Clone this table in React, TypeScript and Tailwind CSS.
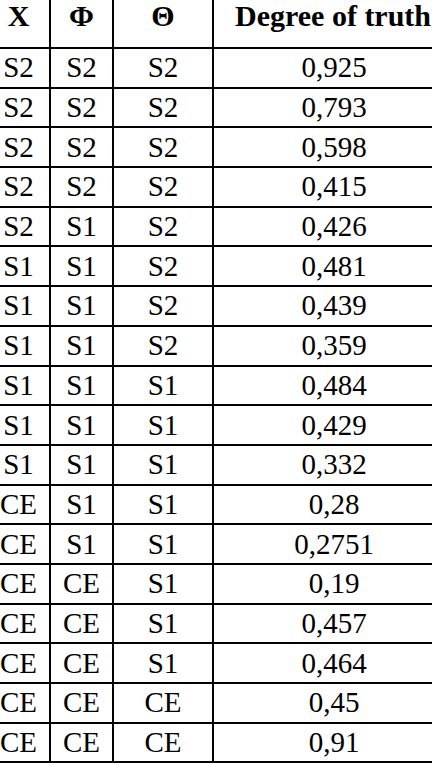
const rows: [string, string, string, string][] = [
  ['S2', 'S2', 'S2', '0,925'],
  ['S2', 'S2', 'S2', '0,793'],
  ['S2', 'S2', 'S2', '0,598'],
  ['S2', 'S2', 'S2', '0,415'],
  ['S2', 'S1', 'S2', '0,426'],
  ['S1', 'S1', 'S2', '0,481'],
  ['S1', 'S1', 'S2', '0,439'],
  ['S1', 'S1', 'S2', '0,359'],
  ['S1', 'S1', 'S1', '0,484'],
  ['S1', 'S1', 'S1', '0,429'],
  ['S1', 'S1', 'S1', '0,332'],
  ['CE', 'S1', 'S1', '0,28'],
  ['CE', 'S1', 'S1', '0,2751'],
  ['CE', 'CE', 'S1', '0,19'],
  ['CE', 'CE', 'S1', '0,457'],
  ['CE', 'CE', 'S1', '0,464'],
  ['CE', 'CE', 'CE', '0,45'],
  ['CE', 'CE', 'CE', '0,91'],
];

const cols = 'grid grid-cols-[63px_63px_100px_240px]';

export default function App() {
  return (
    <div className="w-[432px] h-[763px] overflow-hidden bg-white text-black font-['Liberation_Serif',serif]">
      <div className="ml-[-12px] mt-[-16px] w-[466px]">
        {/* header */}
        <div className={`${cols} h-[65px] text-[30px] font-bold leading-none`}>
          <div className="flex items-center justify-center border-r-2 border-b-2 border-black">X</div>
          <div className="flex items-center justify-center border-r-2 border-b-2 border-black">Φ</div>
          <div className="flex items-center justify-center border-r-2 border-b-2 border-black">Θ</div>
          <div className="flex items-center justify-start pl-[21px] border-b-2 border-black whitespace-nowrap">Degree of truth</div>
        </div>
        {rows.map((r, i) => (
          <div key={i} className={`${cols} h-[39.7px] text-[29px] leading-none`}>
            <div className="flex items-center justify-center border-r-2 border-b-2 border-black">{r[0]}</div>
            <div className="flex items-center justify-center border-r-2 border-b-2 border-black">{r[1]}</div>
            <div className="flex items-center justify-center border-r-2 border-b-2 border-black">{r[2]}</div>
            <div className="flex items-center justify-center border-b-2 border-black">{r[3]}</div>
          </div>
        ))}
      </div>
    </div>
  );
}
